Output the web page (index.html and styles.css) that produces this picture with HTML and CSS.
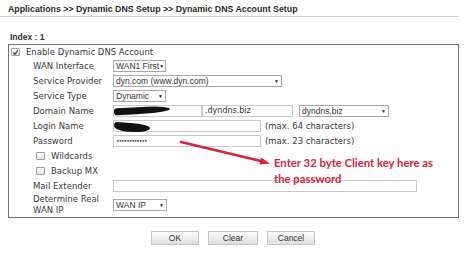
FILE: index.html
```html
<!DOCTYPE html>
<html lang="en">
<head>
    <meta charset="UTF-8">
    <title>Dynamic DNS Account Setup</title>
    <link rel="stylesheet" href="styles.css">
</head>
<body>
    <!-- Breadcrumb -->
    <div class="crumb">Applications &gt;&gt; Dynamic DNS Setup &gt;&gt; Dynamic DNS Account Setup</div>
    <div class="index">Index : 1</div>

    <!-- Settings panel -->
    <div class="panel">
        <div class="row first">
            <span class="check"><svg viewBox="0 0 7 7" width="7" height="7"><path d="M1.2 3.6 L2.9 5.3 L5.8 1.3" fill="none" stroke="#444" stroke-width="1.3"/></svg></span>
            <span>Enable Dynamic DNS Account</span>
        </div>
        <div class="row">
            <span class="label">WAN Interface</span>
            <span class="select w-wan">WAN1 First<i>▼</i></span>
        </div>
        <div class="row">
            <span class="label">Service Provider</span>
            <span class="select w-provider">dyn.com (www.dyn.com)<i>▼</i></span>
        </div>
        <div class="row">
            <span class="label">Service Type</span>
            <span class="select w-wan">Dynamic<i>▼</i></span>
        </div>
        <div class="row">
            <span class="label">Domain Name</span>
            <span class="fields">
                <span class="field w-host"><b class="redact redact-domain"></b></span>
                <span class="field w-suffix">.dyndns.biz</span>
                <span class="select w-domain">dyndns.biz<i>▼</i></span>
            </span>
        </div>
        <div class="row">
            <span class="label">Login Name</span>
            <span class="fields">
                <span class="field w-login"><b class="redact redact-login"></b></span>
                <span class="hint">(max. 64 characters)</span>
            </span>
        </div>
        <div class="row">
            <span class="label">Password</span>
            <span class="fields">
                <span class="field w-login dots">••••••••••••</span>
                <span class="hint">(max. 23 characters)</span>
            </span>
        </div>
        <div class="row sub">
            <span class="check"></span>
            <span>Wildcards</span>
        </div>
        <div class="row sub">
            <span class="check"></span>
            <span>Backup MX</span>
        </div>
        <div class="row">
            <span class="label">Mail Extender</span>
            <span class="field w-mail"></span>
        </div>
        <div class="row tall">
            <span class="label">Determine Real<br>WAN IP</span>
            <span class="select w-wanip">WAN IP<i>▼</i></span>
        </div>
    </div>

    <!-- Actions -->
    <div class="buttons">
        <button class="btn">OK</button>
        <button class="btn w-clear">Clear</button>
        <button class="btn">Cancel</button>
    </div>

    <!-- Annotation -->
    <svg class="arrow" width="474" height="262" viewBox="0 0 474 262">
        <path d="M181 142 L265 162" stroke="#d8233a" stroke-width="2.6" stroke-linecap="round"/>
        <path d="M261 157.5 L270 163.5 L259.5 164.5 Z" fill="#d8233a"/>
    </svg>
    <div class="note">Enter 32 byte Client key here as<br>the password</div>
</body>
</html>
```

FILE: styles.css
```css
body {
    font-family: 'DejaVu Sans', Verdana, sans-serif;
    font-size: 8.5px;
    margin: 0;
    padding: 0;
    color: #3a3a3a;
    background: #fff;
    position: relative;
    width: 474px;
    height: 262px;
    overflow: hidden;
}

/* Breadcrumb */
.crumb {
    font: bold 8.8px 'Liberation Sans', Arial, sans-serif;
    color: #2b2b2b;
    width: 459px;
    height: 17px;
    padding: 3px 0 0 8px;
    line-height: 13px;
    box-sizing: border-box;
    border-bottom: 1px solid #cfcfcf;
}

.index {
    font: bold 8.5px 'Liberation Sans', Arial, sans-serif;
    color: #333;
    padding: 15px 0 2px 10px;
    line-height: 10px;
}

/* Panel */
.panel {
    margin-left: 8px;
    width: 451px;
    height: 174px;
    border: 1px solid #707070;
    box-sizing: border-box;
}

.row {
    display: grid;
    grid-template-columns: 104px auto;
    align-items: center;
    height: 15px;
    white-space: nowrap;
}

.row.first {
    display: flex;
    gap: 6px;
    height: 13px;
    padding-left: 2px;
}

.row.sub {
    display: flex;
    gap: 6px;
    padding-left: 27px;
}

.row.tall {
    height: 24px;
    line-height: 11px;
}

.label {
    padding-left: 24px;
}

.fields {
    display: flex;
    align-items: center;
}

/* Form controls */
.field,
.select {
    display: inline-flex;
    align-items: center;
    position: relative;
    height: 12px;
    padding: 0 2px;
    box-sizing: border-box;
    background: #fff;
    font-size: 8px;
    color: #333;
}

.field {
    border: 1px solid #c9c9c9;
}

.select {
    justify-content: space-between;
    border: 1px solid #a8a8a8;
    font-family: 'Liberation Sans', Arial, sans-serif;
    font-size: 8.5px;
}

.select i {
    font-style: normal;
    font-size: 5px;
    color: #222;
}

.w-wan { width: 53px; }
.w-provider { width: 169px; }
.w-host { width: 89px; }
.w-suffix { width: 91px; }
.w-domain { width: 90px; margin-left: 6px; }
.w-login { width: 148px; }
.w-mail { width: 304px; }
.w-wanip { width: 54px; }

.dots {
    font-size: 6px;
    letter-spacing: -1px;
}

.hint {
    margin-left: 4px;
}

/* Blacked-out values */
.redact {
    position: absolute;
    background: #111;
}

.redact-domain {
    left: 0;
    top: 1px;
    width: 56px;
    height: 7px;
    border-radius: 3px 40% 60% 3px / 3px 50% 50% 3px;
    transform: rotate(-3deg);
}

.redact-login {
    left: 0;
    top: 2px;
    width: 36px;
    height: 9px;
    border-radius: 3px 60% 60% 40% / 3px 50% 60% 60%;
    transform: rotate(4deg);
}

/* Checkboxes */
.check {
    display: inline-block;
    width: 9px;
    height: 8px;
    border: 1px solid #a0a0a0;
    border-radius: 1px;
    background: linear-gradient(#fdfdfd, #e2e2e2);
    box-sizing: border-box;
}

.check svg {
    display: block;
}

/* Buttons */
.buttons {
    display: flex;
    gap: 9px;
    margin: 13px 0 0 151px;
}

.btn {
    width: 48px;
    height: 14px;
    padding: 0;
    font: 8.5px 'Liberation Sans', Arial, sans-serif;
    color: #333;
    border: 1px solid #c4c4c4;
    background: linear-gradient(#fbfbfb, #dedede);
}

.btn.w-clear {
    width: 50px;
}

/* Annotation overlay */
.arrow {
    position: absolute;
    left: 0;
    top: 0;
    pointer-events: none;
}

.note {
    position: absolute;
    left: 274px;
    top: 155px;
    font: bold 11.3px 'Lato', 'Open Sans', sans-serif;
    line-height: 16px;
    color: #d8233a;
    white-space: nowrap;
}
```
